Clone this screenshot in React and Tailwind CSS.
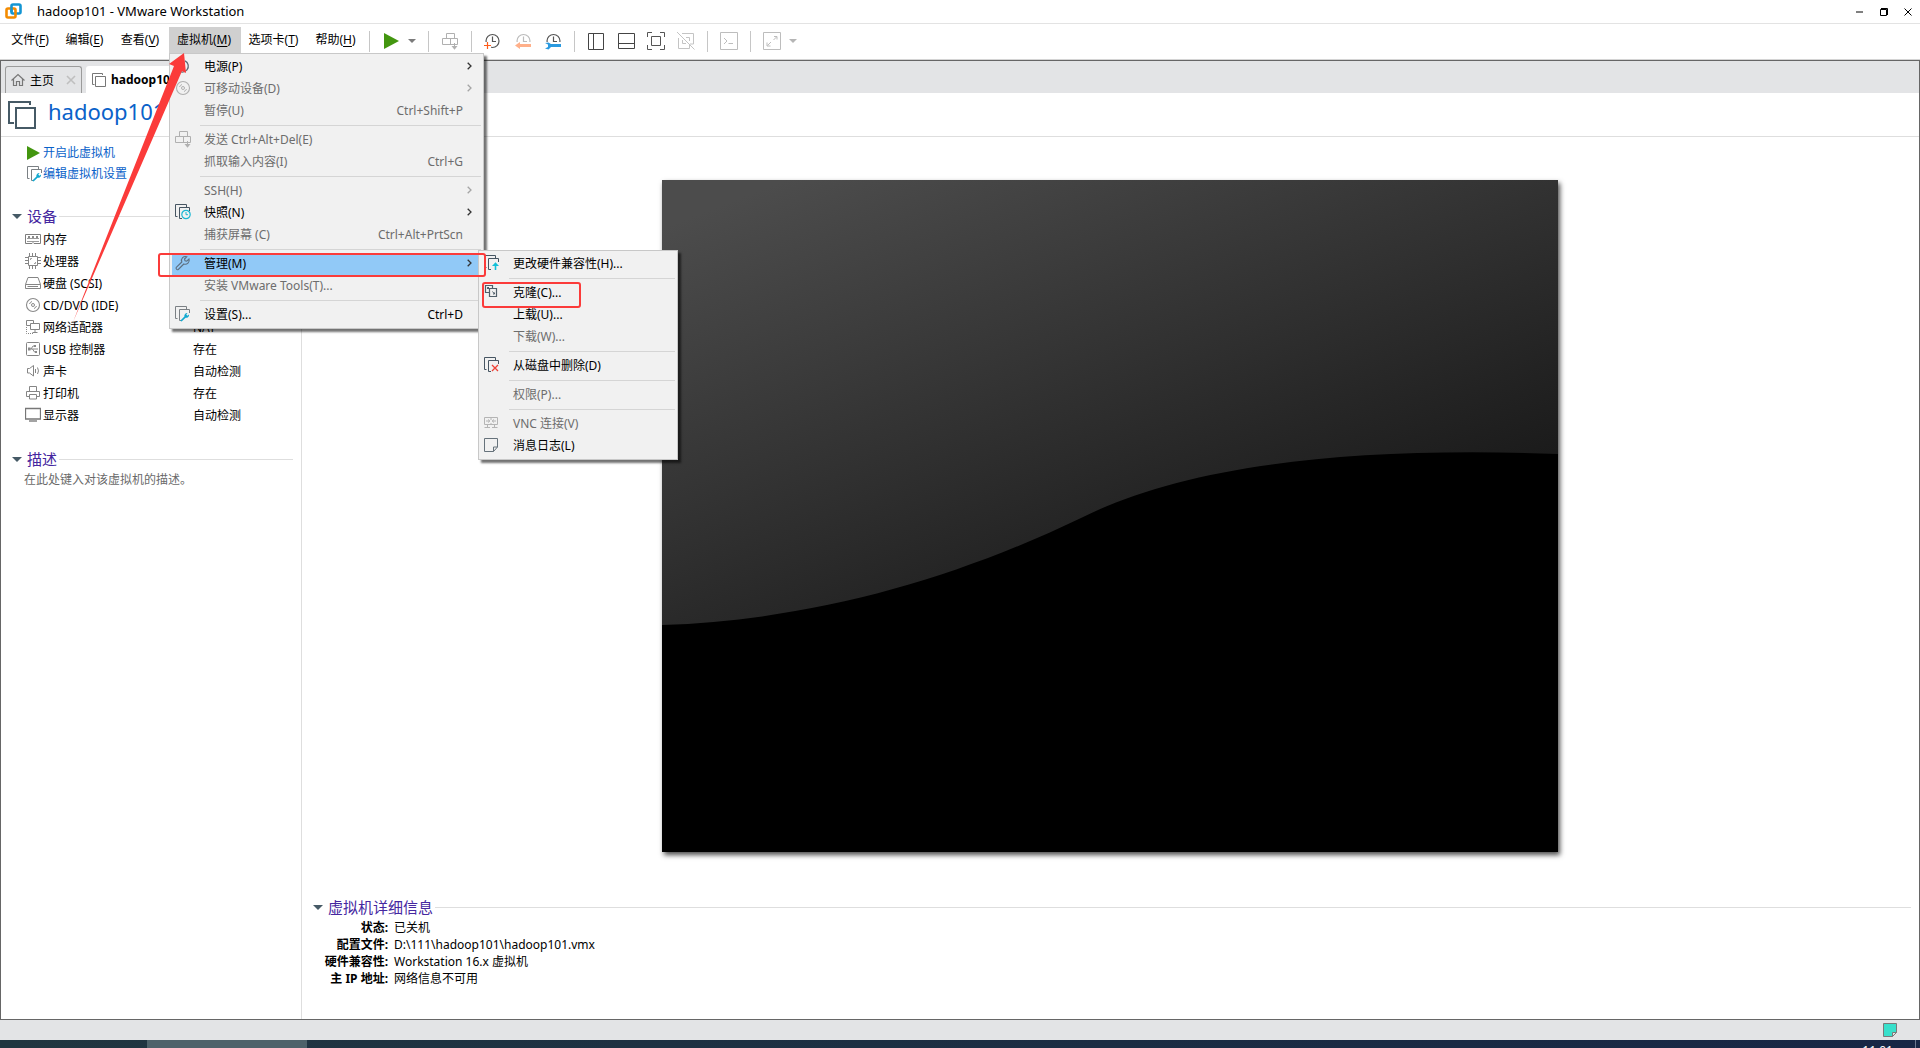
import React from "react";

function Svg({ w, h, className = "", children }) {
  return (
    <svg width={w} height={h} viewBox={`0 0 ${w} ${h}`} fill="none" aria-hidden="true" className={`shrink-0 ${className}`}>
      {children}
    </svg>
  );
}

const wrench = "M6.2 15.8 10.4 11.6A2.9 2.9 0 0 1 13.6 8L12.3 9.6 13.4 10.7 15 9.4A2.9 2.9 0 0 1 11.6 12.8L7.6 16.4Z";

function VmGlyph({ color = "#465562", children }) {
  return (
    <Svg w={16} h={16}>
      <path d="M11.5 3V.5H.5V12.5H2.5" stroke={color} />
      <path d="M14.5 7V3.5H4.5V14.5H7" stroke={color} />
      {children}
    </Svg>
  );
}

const PowerIcon = () => (
  <Svg w={16} h={16}>
    <path d="M4.6 2.8A6 6 0 1 0 10 2.8M7.3 1V7" stroke="#5d6a75" strokeWidth="1.3" />
  </Svg>
);
const DiscIcon = ({ color = "#8a8a8a" }) => (
  <Svg w={16} h={16}>
    <circle cx="8" cy="8" r="6.5" stroke={color} strokeWidth="1.1" />
    <circle cx="8" cy="8" r="1.5" stroke={color} />
    <path d="M4.5 7A4 4 0 0 1 7 4.5M9 11.5A4 4 0 0 0 11.5 9" stroke={color} />
  </Svg>
);
const KeysIcon = ({ color = "#b0b0b0" }) => (
  <Svg w={17} h={17}>
    <path d="M4.5.5H12.500V5.500H4.500ZM.5 5.500H15.500V11.500H.5ZM8.500 5.500V11.500M12.500 10V15" stroke={color} />
    <path d="M9.500 13H15.500L12.500 16.800Z" fill={color} />
  </Svg>
);
const SnapshotMenuIcon = () => (
  <VmGlyph>
    <circle cx="11" cy="10.500" r="4.200" fill="#f2f2f2" stroke="#1bb8d4" strokeWidth="1.2" />
    <path d="M11 8V10.700H13" stroke="#1bb8d4" />
  </VmGlyph>
);
const VmWrenchIcon = () => (
  <VmGlyph color="#7b8084">
    <path d={wrench} fill="#12a9d0" transform="translate(-1 -1)" />
  </VmGlyph>
);
const WrenchIcon = () => (
  <Svg w={16} h={16}>
    <path
      d="M1.3 12.400 6.800 7A4 4 0 0 1 11.800 1.700L9.500 4 10 5.700 11.700 6.200 14 4A4 4 0 0 1 8.800 9L3.300 14.500A1.500 1.500 0 0 1 1.300 12.400Z"
      stroke="#5d6f80"
      strokeWidth="1.1"
    />
  </Svg>
);
const VmUpIcon = () => (
  <VmGlyph>
    <path d="M11.500 15V9" stroke="#12c0d8" strokeWidth="1.6" />
    <path d="M8 11 11.500 7.200 15 11Z" fill="#12c0d8" />
  </VmGlyph>
);
const VmDeleteIcon = () => (
  <VmGlyph>
    <path d="M8 8 14 14M14 8 8 14" stroke="#ee4035" strokeWidth="1.3" />
  </VmGlyph>
);
const CloneIcon = () => (
  <Svg w={16} h={16}>
    <path d="M5.500 8.500H1.500V1.500H8.500V4.500M5.500 4.500H12.500V12.500H5.500Z" stroke="#4f5e69" strokeWidth="1.2" />
    <path d="M3.500 3.500 6 6M3.500 5V3.500H5M8.500 7.500 10.500 10M10.500 8.500V10H9" stroke="#4f5e69" />
  </Svg>
);
const VncIcon = () => (
  <Svg w={16} h={16}>
    <path d="M.5 2.500H13.500V9.500H.5ZM7 2.500V5M7 8V9.500M3.500 9.500V12.500M10.500 9.500V12.500M.5 12.500H6M8 12.500H13.500M2 6H6M8 6H12M4 4.500 5.800 6 4 7.500M10 4.500 8.200 6 10 7.500" stroke="#b4b4b4" />
  </Svg>
);
const LogIcon = () => (
  <Svg w={16} h={16}>
    <path d="M.5 1.500H13.500V10L9.500 14.500H.5ZM13.500 10H9.500V14.500" stroke="#66727b" />
  </Svg>
);

const MemoryIcon = () => (
  <Svg w={16} h={16}>
    <path d="M.5 3.500H15.500V12.500H9L8 11.500 7 12.500H.5Z" stroke="#7d7d7d" />
    <path d="M2 7.500H14M2 10.500H14" stroke="#9a9a9a" />
    <path d="M3 5H5V7H3ZM7 5H9V7H7ZM11 5H13V7H11Z" fill="#8a8a8a" />
  </Svg>
);
const CpuIcon = () => (
  <Svg w={16} h={16}>
    <path d="M3.500 3.500H12.500V12.500H3.500ZM4.500 0V3M7.500 0V3M10.500 0V3M4.500 13V16M7.500 13V16M10.500 13V16M0 4.500H3M0 7.500H3M0 10.500H3M13 4.500H16M13 7.500H16M13 10.500H16" stroke="#858585" />
    <path d="M5.500 7V5.500H7M9 10.500H10.500V9" stroke="#a0a0a0" />
  </Svg>
);
const DiskIcon = () => (
  <Svg w={16} h={16}>
    <path d="M3 2.500H13L15.500 9.500V13.500H.5V9.500ZM.5 9.500H15.500M2.500 11.500H13" stroke="#858585" />
  </Svg>
);
const NetIcon = () => (
  <Svg w={16} h={16}>
    <path d="M1.500 1.500H8.500V6.500H1.500ZM5.500 4.500H14.500V10.500H5.500ZM10 11V13M7.500 13.500H12.500" stroke="#858585" />
    <path d="M6 5H14V10H6Z" fill="#fff" />
    <path d="M1.500 8V14.500H9" stroke="#858585" strokeDasharray="1 1" />
  </Svg>
);
const UsbIcon = () => (
  <Svg w={16} h={16}>
    <rect x="1.500" y="1.500" width="13" height="13" rx="1" stroke="#858585" />
    <path d="M3 8H13M6 8 8 5H10M7.500 8 9.500 11H11" stroke="#8a8a8a" />
    <path d="M3 6.500H5.500V9.500H3ZM9 4H11V6H9ZM10 10H12V12H10Z" fill="#8a8a8a" />
  </Svg>
);
const SoundIcon = () => (
  <Svg w={16} h={16}>
    <path d="M2.500 5.500H4.500L8.500 2.500V13L4.500 10H2.500ZM10.500 6V10M12.500 4.500Q14.500 8 12.500 11" stroke="#858585" />
  </Svg>
);
const PrinterIcon = () => (
  <Svg w={16} h={16}>
    <path d="M4.500 6V1.500H11.500V6M4 11.500H1.500V6.500H14.500V11.500H12M4.500 9.500H11.500V14H4.500Z" stroke="#858585" />
  </Svg>
);
const DisplayIcon = () => (
  <Svg w={16} h={16}>
    <path d="M.5 1.500H15.500V12H.5Z" stroke="#777" strokeWidth="1.3" />
    <path d="M4 14H12" stroke="#858585" strokeWidth="1.5" />
  </Svg>
);

const ClockFace = ({ color }) => (
  <>
    <circle cx="8.500" cy="8" r="6.500" stroke={color} strokeWidth="1.200" />
    <path d="M8.500 3.500V8.500H12" stroke={color} strokeWidth="1.200" />
  </>
);

const caret = (color, cls) => (
  <Svg w={8} h={4} className={cls}>
    <path d="M0 0H8L4 4Z" fill={color} />
  </Svg>
);

function ToolButton({ label, className, children }) {
  return (
    <button type="button" aria-label={label} className={`flex h-6 items-center justify-center ${className}`}>
      {children}
    </button>
  );
}

const Divider = ({ className }) => <span className={`h-[21px] w-px bg-[#c6c6c6] ${className}`} />;

const Arrow = ({ color }) => (
  <Svg w={5} h={8}>
    <path d="M.7.7 4 4 .7 7.300" stroke={color} strokeWidth="1.300" />
  </Svg>
);

function MenuRow({ item }) {
  if (item === "-") {
    return (
      <li role="separator" className="flex h-[7px] items-center pl-7">
        <span className="h-px flex-1 bg-[#d5d5d5]" />
      </li>
    );
  }
  const Icon = item.icon;
  return (
    <li role="none">
      <button
        type="button"
        role="menuitem"
        disabled={item.off}
        className={`flex h-[22px] w-full items-center pb-0.5 pr-[9px] text-left ${item.active ? "bg-[#91c9f7]" : ""} ${item.off ? "text-[#6d6d6d]" : "text-black"}`}
      >
        <span className="flex w-8 shrink-0 pl-[3px]">{Icon ? <Icon color="#b0b0b0" /> : null}</span>
        <span className="flex-1 whitespace-nowrap">{item.label}</span>
        {item.keys ? <span className="pr-[9px]">{item.keys}</span> : null}
        {item.sub ? <Arrow color={item.off ? "#a5a5a5" : "#333"} /> : null}
      </button>
    </li>
  );
}

const vmMenu = [
  { label: "电源(P)", icon: PowerIcon, sub: true },
  { label: "可移动设备(D)", icon: DiscIcon, sub: true, off: true },
  { label: "暂停(U)", keys: "Ctrl+Shift+P", off: true },
  "-",
  { label: "发送 Ctrl+Alt+Del(E)", icon: KeysIcon, off: true },
  { label: "抓取输入内容(I)", keys: "Ctrl+G", off: true },
  "-",
  { label: "SSH(H)", sub: true, off: true },
  { label: "快照(N)", icon: SnapshotMenuIcon, sub: true },
  { label: "捕获屏幕 (C)", keys: "Ctrl+Alt+PrtScn", off: true },
  "-",
  { label: "管理(M)", icon: WrenchIcon, sub: true, active: true },
  { label: "安装 VMware Tools(T)...", off: true },
  "-",
  { label: "设置(S)...", icon: VmWrenchIcon, keys: "Ctrl+D" },
];

const manageMenu = [
  { label: "更改硬件兼容性(H)...", icon: VmUpIcon },
  "-",
  { label: "克隆(C)...", icon: CloneIcon },
  { label: "上载(U)..." },
  { label: "下载(W)...", off: true },
  "-",
  { label: "从磁盘中删除(D)", icon: VmDeleteIcon },
  "-",
  { label: "权限(P)...", off: true },
  "-",
  { label: "VNC 连接(V)", icon: VncIcon, off: true },
  { label: "消息日志(L)", icon: LogIcon },
];

const devices = [
  ["内存", "", MemoryIcon],
  ["处理器", "", CpuIcon],
  ["硬盘 (SCSI)", "", DiskIcon],
  ["CD/DVD (IDE)", "", DiscIcon],
  ["网络适配器", "NAT", NetIcon],
  ["USB 控制器", "存在", UsbIcon],
  ["声卡", "自动检测", SoundIcon],
  ["打印机", "存在", PrinterIcon],
  ["显示器", "自动检测", DisplayIcon],
];

const details = [
  ["状态:", "已关机"],
  ["配置文件:", "D:\\111\\hadoop101\\hadoop101.vmx"],
  ["硬件兼容性:", "Workstation 16.x 虚拟机"],
  ["主 IP 地址:", "网络信息不可用"],
];

const menus = [
  ["文件", "F", "w-[54px]"],
  ["编辑", "E", "w-[55px]"],
  ["查看", "V", "w-[56px]"],
  ["虚拟机", "M", "w-[72px]"],
  ["选项卡", "T", "w-[67px]"],
  ["帮助", "H", "w-[57px]"],
];

const menuPanel = "absolute border border-[#c8c8c8] bg-[#f1f1f1] p-0.5 shadow-[3px_3px_2px_rgba(0,0,0,0.55)]";

function SectionTitle({ children }) {
  return (
    <div className="flex h-5 items-center">
      <Svg w={10} h={5} className="mr-[5px]">
        <path d="M0 0H10L5 5Z" fill="#465a66" />
      </Svg>
      <h2 className="text-[15px] leading-5 text-[#4527a0]">{children}</h2>
      <span className="ml-0.5 h-px flex-1 bg-[#dedede]" />
    </div>
  );
}

function TitleBar() {
  return (
    <header className="flex h-6 items-center border-b border-[#e3e3e3] bg-white pl-[5px] pr-2">
      <Svg w={17} h={17}>
        <rect x="6.500" y="1.500" width="9" height="9" rx="1.500" stroke="#1395d3" strokeWidth="2.600" />
        <rect x="1.500" y="5.500" width="9" height="9" rx="1.500" stroke="#f38b00" strokeWidth="2.600" />
        <path d="M6.500 9V4" stroke="#1395d3" strokeWidth="2.400" />
      </Svg>
      <h1 className="ml-[15px] flex-1 text-[13px]">hadoop101 - VMware Workstation</h1>
      <div className="flex h-full items-center gap-4">
        <button type="button" aria-label="最小化">
          <Svg w={8} h={8}><path d="M0 4H7" stroke="#000" /></Svg>
        </button>
        <button type="button" aria-label="还原">
          <Svg w={8} h={8}>
            <path d="M.5 1.500H6.500V7.500H.5Z" stroke="#000" />
            <path d="M1 .5H7.500V7" stroke="#000" />
          </Svg>
        </button>
        <button type="button" aria-label="关闭">
          <Svg w={8} h={8}><path d="M.5.5 7.500 7.500M7.500.5.5 7.500" stroke="#000" /></Svg>
        </button>
      </div>
    </header>
  );
}

function MenuBar() {
  return (
    <div className="flex h-9 items-start border-b border-[#d4d4d4] bg-white pl-1">
      <nav className="flex pt-[3px]">
        {menus.map(([name, key, width]) => (
          <div key={key} className="relative">
            <button type="button" className={`h-[26px] whitespace-nowrap pb-0.5 pr-0.5 text-center ${width} ${key === "M" ? "bg-[#d0d0d0]" : ""}`}>
              {name}(<u className="underline-offset-2">{key}</u>)
            </button>
            {key === "M" && (
              <div className={`${menuPanel} left-0 top-full z-10 w-[315px]`}>
                <ul role="menu">
                  {vmMenu.map((item, i) => <MenuRow key={i} item={item} />)}
                </ul>
                <ul role="menu" className={`${menuPanel} left-[308px] top-[196px] w-[200px]`}>
                  {manageMenu.map((item, i) => <MenuRow key={i} item={item} />)}
                </ul>
              </div>
            )}
          </div>
        ))}
      </nav>
      <div className="flex items-center pt-[5px]">
        <Divider className="ml-1" />
        <ToolButton label="开启此虚拟机" className="ml-[13px] w-4">
          <Svg w={15} h={16}><path d="M0 0 15 8 0 16Z" fill="#43960f" /></Svg>
        </ToolButton>
        <ToolButton label="电源选项" className="ml-[9px] w-2">{caret("#7b7b7b")}</ToolButton>
        <Divider className="ml-3" />
        <ToolButton label="发送 Ctrl+Alt+Del" className="ml-[13px] w-[17px]"><KeysIcon /></ToolButton>
        <Divider className="ml-3" />
        <ToolButton label="拍摄快照" className="ml-3 w-[17px]">
          <Svg w={17} h={17}>
            <ClockFace color="#555" />
            <path d="M0 9H7V17H0Z" fill="#fff" />
            <path d="M3.500 9V16M0 12.500H7" stroke="#ff5c1a" strokeWidth="1.200" />
          </Svg>
        </ToolButton>
        <ToolButton label="恢复快照" className="ml-[14px] w-[17px]">
          <Svg w={17} h={17}>
            <ClockFace color="#bcbcbc" />
            <path d="M0 9H17V17H0Z" fill="#fff" />
            <path d="M0 12.500 5 9V11H16V14H5V16Z" fill="#ffb08a" />
          </Svg>
        </ToolButton>
        <ToolButton label="管理快照" className="ml-[13px] w-[17px]">
          <Svg w={17} h={17}>
            <ClockFace color="#555" />
            <path d="M0 9H17V17H0Z" fill="#fff" />
            <path d="M0 10 3.500 9.500 6 11H16V14H6L3.500 16.500 0 15.500 3 14V11.500Z" fill="#2a9ae0" />
          </Svg>
        </ToolButton>
        <Divider className="ml-3" />
        <ToolButton label="显示或隐藏库" className="ml-[13px] w-[17px]">
          <Svg w={17} h={17}><path d="M.5.5H15.500V16.500H.5ZM5.500.5V16.500" stroke="#444" /></Svg>
        </ToolButton>
        <ToolButton label="显示或隐藏缩略图栏" className="ml-[13px] w-[17px]">
          <Svg w={17} h={16}><path d="M.5.5H16.500V15.500H.5ZM.5 10.500H16.500" stroke="#444" /></Svg>
        </ToolButton>
        <ToolButton label="全屏" className="ml-3 w-[18px]">
          <Svg w={18} h={18}>
            <path d="M5 .5H.5V5M13 .5H17.500V5M.5 13V17.500H5M17.500 13V17.500H13M4.500 4.500H13.500V13.500H4.500Z" stroke="#555" />
          </Svg>
        </ToolButton>
        <ToolButton label="Unity" className="ml-3 w-[18px]">
          <Svg w={18} h={18}>
            <path d="M5 1.500H16.500V12H13M1.500 6V16.500H12.500V13M5.500 8V11.500H9M9 5.500H12.500V9M0 0 17.500 17.500" stroke="#c4c4c4" />
          </Svg>
        </ToolButton>
        <Divider className="ml-3" />
        <ToolButton label="控制台" className="ml-3 w-[18px]">
          <Svg w={18} h={18}><path d="M.5.5H17.500V17.500H.5ZM4 6 7 9 4 12M8.500 11.500H13" stroke="#bdbdbd" /></Svg>
        </ToolButton>
        <Divider className="ml-3" />
        <ToolButton label="拉伸客户机" className="ml-3 w-[18px]">
          <Svg w={18} h={18}><path d="M.5.5H17.500V17.500H.5ZM11 4.500H14V7.500M13.500 5 10.500 8M4 10.500V14H7.500M4.500 13.500 8 10" stroke="#bdbdbd" /></Svg>
        </ToolButton>
        <ToolButton label="拉伸选项" className="ml-2 w-2">{caret("#b5b5b5")}</ToolButton>
      </div>
    </div>
  );
}

function Tabs() {
  return (
    <div className="flex h-8 items-end bg-[#e3e4e6] pl-1">
      <div className="flex h-[27px] w-[77px] items-center rounded-t-[3px] border border-b-0 border-[#9b9b9b] px-[5px]">
        <Svg w={14} h={14}>
          <path d="M.5 7.500 7 1.500 13.500 7.500M2.500 6V12.500H5.500V8.500H8.500V12.500H11.500V6" stroke="#777" strokeWidth="1.200" />
        </Svg>
        <button type="button" className="ml-[5px] flex-1 text-left">主页</button>
        <button type="button" aria-label="关闭主页">
          <Svg w={10} h={10}><path d="M1 1 9 9M9 1 1 9" stroke="#bfbfbf" strokeWidth="1.600" /></Svg>
        </button>
      </div>
      <div className="ml-1 flex h-[27px] w-[140px] items-center rounded-t-[3px] bg-white pl-1.5">
        <Svg w={14} h={14}>
          <path d="M10.500 2V.5H.5V11.500H2.500M3.500 3.500H13.500V13.500H3.500Z" stroke="#777" />
        </Svg>
        <button type="button" className="ml-[5px] font-bold">hadoop101</button>
      </div>
    </div>
  );
}

function Sidebar() {
  return (
    <aside className="w-[301px] shrink-0 border-r border-[#dedede] pt-[5px]">
      <div className="flex flex-col pl-[26px] text-[#0a62c9]">
        <a href="#start" className="flex h-[21px] items-center gap-[3px]">
          <Svg w={13} h={14}><path d="M0 0 13 7 0 14Z" fill="#43960f" /></Svg>
          开启此虚拟机
        </a>
        <a href="#settings" className="flex h-[21px] items-center">
          <VmWrenchIcon />
          编辑虚拟机设置
        </a>
      </div>
      <div className="mt-[22px] pl-[11px] pr-2">
        <SectionTitle>设备</SectionTitle>
        <table className="mt-0.5">
          <tbody>
            {devices.map(([name, value, Icon]) => (
              <tr key={name} className="h-[22px]">
                <td className="w-[169px] p-0">
                  <span className="flex items-center gap-0.5 pl-[13px]">
                    <Icon />
                    {name}
                  </span>
                </td>
                <td className="p-0 pl-3">{value}</td>
              </tr>
            ))}
          </tbody>
        </table>
      </div>
      <div className="mt-[23px] pl-[11px] pr-2">
        <SectionTitle>描述</SectionTitle>
        <p className="mt-0.5 pl-3 text-[#6a6a6a]">在此处键入对该虚拟机的描述。</p>
      </div>
    </aside>
  );
}

function Screen() {
  return (
    <svg viewBox="0 0 896 672" className="block w-[896px] max-w-full shadow-[2px_3px_5px_rgba(0,0,0,0.7)]" role="img" aria-label="虚拟机屏幕">
      <defs>
        <linearGradient id="sheen" gradientUnits="userSpaceOnUse" x1="16" y1="42" x2="208" y2="537">
          <stop offset="0" stopColor="#4c4c4c" />
          <stop offset="1" stopColor="#1b1b1b" />
        </linearGradient>
      </defs>
      <rect width="896" height="672" fill="#000" />
      <path d="M0 0H896V274C680 266 520 287 419 338C290 400 150 440 0 445Z" fill="url(#sheen)" />
    </svg>
  );
}

function Annotations() {
  return (
    <div className="pointer-events-none absolute inset-0 z-20">
      <div className="absolute left-[158px] top-[253px] h-6 w-[328px] rounded-[3px] border-2 border-[#fb3b3a]" />
      <div className="absolute left-[482px] top-[282px] h-[26px] w-[99px] rounded-[3px] border-2 border-[#fb3b3a]" />
      <svg width="200" height="330" viewBox="0 0 200 330" className="absolute left-0 top-0" aria-hidden="true">
        <path d="M184 53 186 73 182 71 73 322 174 66 169 64Z" fill="#fb3b3a" />
      </svg>
    </div>
  );
}

export default function App() {
  return (
    <div className="relative flex min-h-screen flex-col overflow-hidden bg-white font-['Noto_Sans','Noto_Sans_CJK_SC',sans-serif] text-[12px] leading-[17px] text-black">
      <TitleBar />
      <MenuBar />
      <div className="flex flex-1 flex-col border border-[#666]">
        <Tabs />
        <div className="flex h-11 items-center border-b border-[#dedede] pl-[7px]">
          <Svg w={28} h={28}>
            <path d="M22 4V1H1V22H6" stroke="#465a66" strokeWidth="2" />
            <rect x="8" y="7" width="19" height="20" stroke="#465a66" strokeWidth="2" />
          </Svg>
          <h2 className="ml-3 pb-2 text-[22px] leading-8 text-[#0a62c9]">hadoop101</h2>
        </div>
        <div className="flex flex-1">
          <Sidebar />
          <main className="flex min-w-0 flex-1 flex-col">
            <div className="flex flex-1 items-center justify-center pb-0.5 pr-px">
              <Screen />
            </div>
            <section className="pb-8 pl-[11px] pr-2">
              <SectionTitle>虚拟机详细信息</SectionTitle>
              <dl className="mt-0.5">
                {details.map(([k, v]) => (
                  <div key={k} className="flex gap-1.5">
                    <dt className="w-[75px] text-right font-bold whitespace-nowrap">{k}</dt>
                    <dd>{v}</dd>
                  </div>
                ))}
              </dl>
            </section>
          </main>
        </div>
      </div>
      <footer className="flex h-5 items-center justify-end bg-[#e3e4e6] pr-[23px]">
        <button type="button" aria-label="消息日志">
          <Svg w={14} h={14}>
            <path d="M.5.5H13.500V9.500L9.500 13.500H.5Z" fill="#38e0cb" stroke="#7a7a7a" />
            <path d="M9.500 13.500V9.500H13.500Z" fill="#e3e4e6" stroke="#7a7a7a" />
          </Svg>
        </button>
      </footer>
      <div className="flex h-2 overflow-hidden bg-linear-to-r from-[#203640] to-[#182645] pl-[147px]">
        <span className="w-40 bg-[#4d626a]" />
        <time className="ml-auto pt-0.5 text-white">11:01</time>
        <span className="ml-[22px] mr-1 w-px bg-[#6d7890]" />
      </div>
      <Annotations />
    </div>
  );
}
